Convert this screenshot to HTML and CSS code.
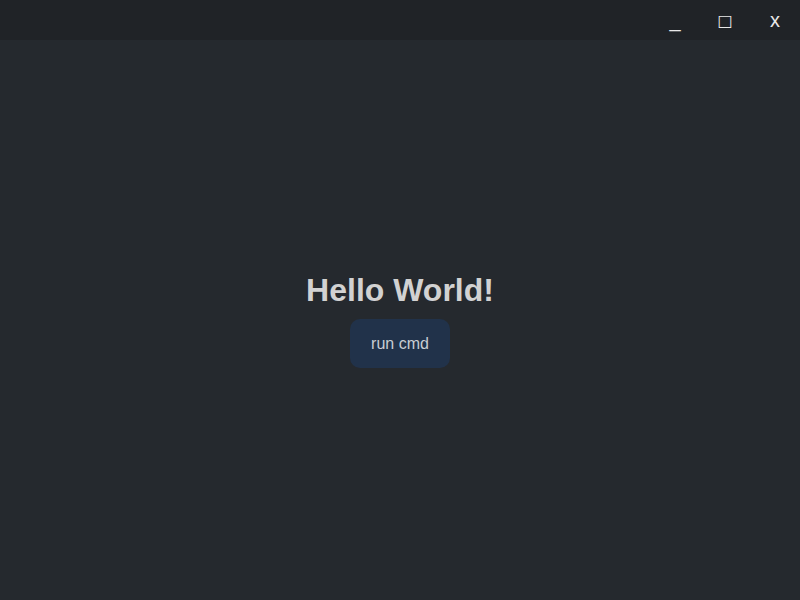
FILE: index.html
```html
<!DOCTYPE html>
<html>
<head>
<meta charset="utf-8">
<link rel="stylesheet" href="styles.css">
</head>
<body>
<div class="app">
  <div class="titlebar">
    <div class="drag"></div>
    <button class="tb-btn">_</button>
    <button class="tb-btn tb-max">&#9633;</button>
    <button class="tb-btn">x</button>
  </div>
  <main class="content">
    <h1 class="title">Hello World!</h1>
    <button class="run">run cmd</button>
  </main>
</div>
</body>
</html>
```
FILE: styles.css
```css
html, body {
  margin: 0;
  padding: 0;
  height: 100%;
}
body {
  background: #25292e;
  font-family: "Liberation Sans", Arial, sans-serif;
  color: #d0d0d0;
}
.app {
  display: flex;
  flex-direction: column;
  height: 100%;
}
.titlebar {
  height: 40px;
  flex: none;
  display: flex;
  background: #202327;
}
.drag {
  flex: 1;
}
.tb-btn {
  width: 50px;
  height: 40px;
  border: none;
  background: transparent;
  color: #e8e8e8;
  font-family: "Liberation Sans", Arial, sans-serif;
  font-size: 20px;
  padding: 0;
  display: flex;
  align-items: center;
  justify-content: center;
}
.tb-max {
  font-family: "DejaVu Sans", sans-serif;
  font-size: 16px;
}
.content {
  flex: 1;
  display: flex;
  flex-direction: column;
  align-items: center;
  justify-content: center;
  gap: 10px;
}
.title {
  margin: 0;
  font-size: 32px;
  font-weight: bold;
  color: #d2d2d2;
  line-height: 37px;
}
.run {
  width: 100px;
  height: 49px;
  border: none;
  border-radius: 10px;
  background: #21324a;
  color: #c8cdd3;
  font-family: "Liberation Sans", Arial, sans-serif;
  font-size: 16px;
}
```
